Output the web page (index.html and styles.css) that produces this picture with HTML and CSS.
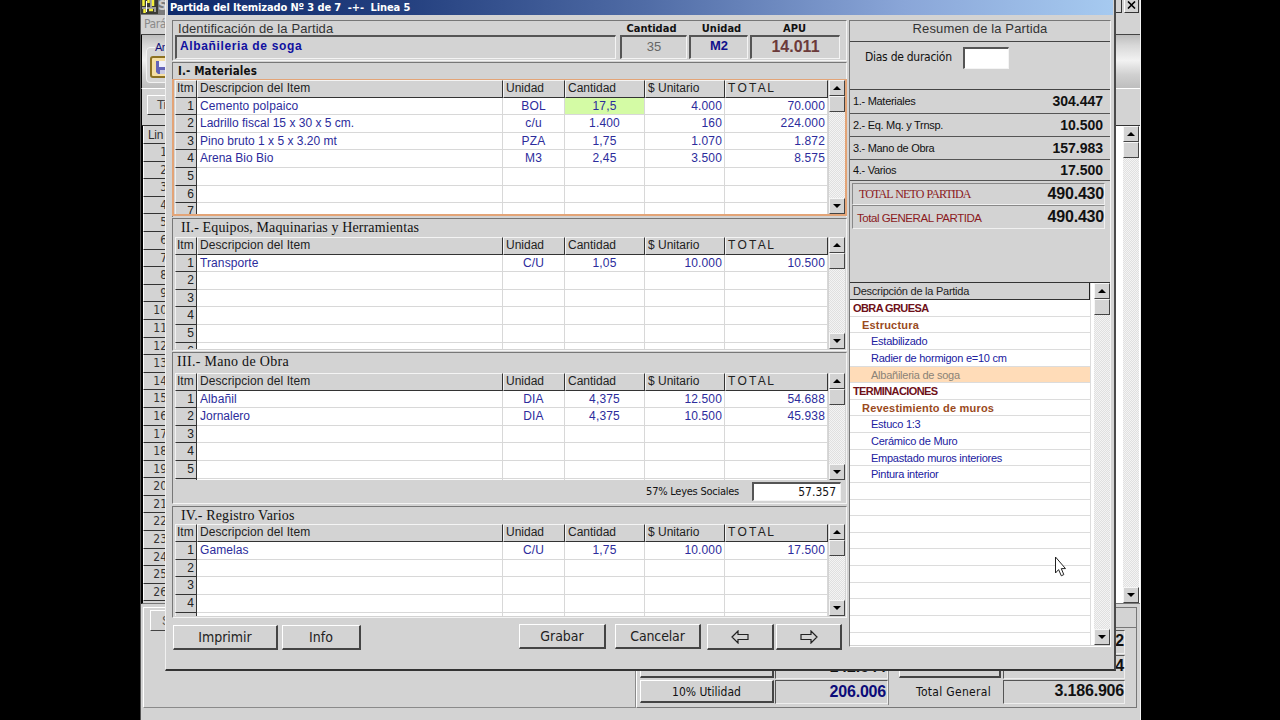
FILE: index.html
```html
<!DOCTYPE html>
<html lang="es">
<head>
  <meta charset="UTF-8" />
  <meta name="viewport" content="width=device-width, initial-scale=1.0"/>
  <title>Partida del Itemizado</title>
  <link rel="stylesheet" href="styles.css">
</head>
<body>
  <div class="main-window">
    <div class="main-title">
      <svg class="app-icon" width="17" height="14" viewBox="0 0 17 14">
        <path d="M0 0h17v14H0z" fill="#3a3a34"/>
        <path d="M2.5 0v6M7.5 0v3M12 0v6M3.500 9v4M8 10h4" stroke="#f4f03a" stroke-width="2.500" fill="none"/>
        <path d="M1 8h14M5.500 1v11M10 0v7M14 9v3" stroke="#fff" stroke-width="1"/>
      </svg>
      <span class="app-name">S</span>
      <div class="title-buttons"><i></i><i class="close"><svg width="9" height="8" viewBox="0 0 9 8"><path d="M1 0.5L8 7.5M8 0.5L1 7.5" stroke="#000" stroke-width="1.6"/></svg></i></div>
    </div>
    <div class="menu">Pará</div>
    <div class="toolbar">
      <fieldset><legend>Ar</legend>
        <div class="tool"><svg width="14" height="15" viewBox="0 0 14 15"><path d="M1 1h12v13H3l-2-2z" fill="#6464b8"/><path d="M4 1h7v6H4z" fill="#f0f0fa"/><path d="M5 10h6v4H5z" fill="#c8c8e0"/></svg></div>
      </fieldset>
    </div>
    <div class="tabs"><div class="tab">Ti</div></div>
    <div class="back-grid">
      <div class="back-rows" id="backRows"><div class="lin">Lin</div></div>
      <div class="scroll" id="backScroll"></div>
    </div>
    <div class="footer">
      <div class="foot-left"><div class="foot-btn">S</div></div>
      <div class="foot-right">
        <div class="foot-strip"></div>
        <div class="sums">
          <div class="sum-labels"><div class="raised"></div><div class="raised">10% Utilidad</div></div>
          <div class="sum-values"><div class="sunken">142.644</div><div class="sunken blue">206.006</div></div>
          <div class="sum-labels second"><div class="raised"></div><div class="plain">Total General</div></div>
          <div class="sum-values last"><div class="sunken">2</div><div class="sunken">4</div><div class="sunken">3.186.906</div></div>
        </div>
      </div>
    </div>
  </div>

  <div class="dialog">
    <div class="dialog-title"><span>Partida del Itemizado Nº 3 de 7 &nbsp;-+-&nbsp; Linea 5</span></div>
    <div class="dialog-body">
      <div class="left">
        <div class="panel ident">
          <div class="ident-name"><label>Identificación de la Partida</label><div class="field name">Albañileria de soga</div></div>
          <div class="ident-col cant"><b>Cantidad</b><div class="field">35</div></div>
          <div class="ident-col unid"><b>Unidad</b><div class="field">M2</div></div>
          <div class="ident-col apu"><b>APU</b><div class="field">14.011</div></div>
        </div>

        <div class="panel materiales">
          <h2>I.- Materiales</h2>
          <div class="grid active" data-grid="materiales"></div>
        </div>
        <div class="panel equipos">
          <h2>II.- Equipos, Maquinarias y Herramientas</h2>
          <div class="grid" data-grid="equipos"></div>
        </div>
        <div class="panel mano">
          <h2>III.- Mano de Obra</h2>
          <div class="grid" data-grid="mano"></div>
          <div class="leyes"><span>57% Leyes Sociales</span><div class="field">57.357</div></div>
        </div>
        <div class="panel varios">
          <h2>IV.- Registro Varios</h2>
          <div class="grid" data-grid="varios"></div>
        </div>

        <div class="buttons">
          <button class="imprimir">Imprimir</button>
          <button class="info">Info</button>
          <button class="grabar">Grabar</button>
          <button class="cancelar">Cancelar</button>
          <button class="prev"><svg width="18" height="14" viewBox="0 0 18 14"><path d="M1 7L7 1V4.5H17V9.5H7V13Z" fill="none" stroke="#222" stroke-width="1.2"/></svg></button>
          <button class="next"><svg width="18" height="14" viewBox="0 0 18 14"><path d="M17 7L11 1V4.5H1V9.5H11V13Z" fill="none" stroke="#222" stroke-width="1.2"/></svg></button>
        </div>
      </div>

      <div class="right">
        <div class="resumen-title"><span>Resumen de la Partida</span></div>
        <div class="dias"><span>Dias de duración</span><div class="field"></div></div>
        <div class="res-row r1"><span>1.- Materiales</span><b>304.447</b></div>
        <div class="res-row r2"><span>2.- Eq. Mq. y Trnsp.</span><b>10.500</b></div>
        <div class="res-row r3"><span>3.- Mano de Obra</span><b>157.983</b></div>
        <div class="res-row r4"><span>4.- Varios</span><b>17.500</b></div>
        <div class="total neto"><span>TOTAL NETO PARTIDA</span><b>490.430</b></div>
        <div class="total general"><span>Total GENERAL PARTIDA</span><b>490.430</b></div>
        <div class="list">
          <div class="list-rows" id="partidas"><div class="list-head">Descripción de la Partida</div></div>
          <div class="scroll" id="listScroll"></div>
        </div>
      </div>
    </div>
  </div>

  <svg class="cursor" width="13" height="21" viewBox="0 0 13 21"><path d="M1.500 1V17L4.6 13.6L7.3 19.8L9.800 18.6L7.3 12.6H11.500Z" fill="#fff" stroke="#222" stroke-width="1"/></svg>

  <script src="script.js"></script>
</body>
</html>
```
FILE: styles.css
```css
* {
  box-sizing: border-box;
}

body {
  margin: 0;
  width: 1280px;
  height: 720px;
  overflow: hidden;
  position: relative;
  background: #000;
  font-family: "Liberation Sans", Arial, sans-serif;
  font-size: 12px;
  color: #111;
}

/* ---- main window behind the dialog ---- */
.main-window {
  width: 1001px;
  height: 720px;
  margin-left: 140px;
  background: #d3d3d3;
  border-left: 1px solid #555;
  border-right: 1px solid #f4f4f4;
  overflow: hidden;
}

.main-title {
  display: flex;
  height: 15px;
  background: #7b7b7b;
}

.app-icon {
  flex: none;
}

.app-name {
  font: bold 14px/11px "DejaVu Sans Condensed", "DejaVu Sans", sans-serif;
  color: #ccc;
}

.title-buttons {
  display: flex;
  gap: 2px;
  margin-left: auto;
  padding-right: 1px;
  background: #d3d3d3;
}

.title-buttons i {
  width: 15px;
  height: 13px;
  background: #d3d3d3;
  border: 1px solid #fff;
  border-top: 0;
  border-right-color: #333;
  border-bottom-color: #333;
}

.close svg {
  display: block;
  margin: 1px 2px;
}

.menu {
  height: 20px;
  padding: 1px 0 0 3px;
  border-bottom: 1px solid #444;
  font: 12px/17px "DejaVu Sans Condensed", "DejaVu Sans", sans-serif;
  letter-spacing: -0.4px;
  color: #8a8a8a;
}

.toolbar {
  height: 53px;
  padding: 4px 0 0 4px;
  border-left: 1px solid #000;
  background: linear-gradient(#bdbdbd, #d8d8d8 20%, #f2f2f2 48%, #d0d0d0 75%, #bebebe);
}

.toolbar fieldset {
  width: 200px;
  height: 44px;
  margin: 0;
  padding: 0 0 0 3px;
  border: 1px solid #f2f2f2;
  border-radius: 4px;
  background: #d6d6d6;
}

.toolbar legend {
  padding: 0;
  margin-left: 5px;
  font-size: 11px;
  line-height: 16px;
  letter-spacing: -0.5px;
  color: #10107a;
}

.tool {
  width: 60px;
  height: 22px;
  margin-top: 1px;
  padding: 2px 3px;
  border: 2px solid #8d7222;
  border-radius: 3px;
  background: #f5dfa5;
}

.tabs {
  height: 37px;
  padding: 6px 0 0 5px;
  border-left: 1px solid #000;
  border-top: 1px solid #fff;
}

.tab {
  width: 100px;
  height: 20px;
  padding-left: 9px;
  line-height: 19px;
  font-size: 12px;
  letter-spacing: -0.5px;
  color: #444;
  border: 1px solid #fff;
  border-bottom: 1px solid #333;
}

.back-grid {
  display: flex;
  height: 479px;
  padding-right: 1px;
  border-top: 1px solid #333;
  border-left: 2px solid #000;
  border-bottom: 1px solid #777;
  background: #fff;
}

.back-rows {
  width: 60px;
  background: #d3d3d3;
  flex: none;
}

.back-rows div {
  height: 17.6px;
  padding-left: 1px;
  border-bottom: 1px solid #333;
  border-left: 1px solid #fff;
  font: 12px/17px "DejaVu Sans Condensed", "DejaVu Sans", sans-serif;
  color: #333;
}

.back-rows div span {
  display: block;
  width: 22px;
  text-align: right;
}

.back-rows .lin {
  height: 18px;
  padding-left: 4px;
  line-height: 18px;
  letter-spacing: -0.3px;
  font-family: "Liberation Sans", sans-serif;
}

.back-grid .scroll {
  margin-left: auto;
}

.footer {
  display: flex;
  height: 116px;
  padding: 3px 3px 12px 2px;
}

.foot-left {
  flex: none;
  width: 493px;
  border: 1px solid #8a8a8a;
  border-left-color: #fff;
  border-top-color: #fff;
  padding: 2px 0 0 6px;
}

.foot-btn {
  width: 60px;
  height: 21px;
  padding-left: 11px;
  line-height: 20px;
  color: #555;
  border: 1px solid #fff;
  border-bottom-color: #444;
}

.foot-right {
  flex: 1;
  border: 1px solid #777;
  border-left-color: #fff;
}

.foot-strip {
  height: 20px;
  border-bottom: 1px solid #777;
}

.sums {
  display: flex;
  padding-left: 3px;
}

.sum-labels {
  display: flex;
  flex-direction: column;
  gap: 2px;
  padding-top: 27px;
  padding-right: 1px;
  width: 135px;
  font: 12px/22px "DejaVu Sans Condensed", "DejaVu Sans", sans-serif;
  text-align: center;
}

.sum-values {
  width: 113px;
  padding-top: 27px;
}

.sum-labels.second {
  width: 115px;
  padding: 27px 2px 0 10px;
  border-left: 1px solid #888;
}

.second .plain {
  padding-left: 7px;
  line-height: 24px;
  letter-spacing: 0.3px;
  white-space: nowrap;
}

.sum-values.last {
  width: 122px;
  padding-top: 2px;
}

.raised,
.sum-labels .plain {
  height: 23px;
}

.raised {
  background: #d3d3d3;
  border: 1px solid #fff;
  border-right: 2px solid #444;
  border-bottom: 2px solid #444;
}

.sum-values .sunken {
  height: 24px;
  margin-bottom: 1px;
  padding-right: 1px;
  text-align: right;
  font: bold 16px/22px "Liberation Sans", sans-serif;
  letter-spacing: -0.2px;
  border: 1px solid #eee;
  border-left-color: #555;
  border-top-color: #555;
}

.last .sunken {
  padding-right: 0;
  line-height: 19px;
}

.sum-values .blue {
  color: #0b0b78;
}

/* ---- dialog ---- */
.dialog {
  position: absolute;
  left: 165px;
  top: 0;
  width: 951px;
  height: 671px;
  background: #d3d3d3;
  border-left: 1px solid #f0f0f0;
  border-right: 2px solid #4a4a4a;
  border-bottom: 2px solid #333;
}

.dialog-title {
  height: 15px;
  margin: 0 1px 0 2px;
  padding-left: 2px;
  background: linear-gradient(to right, #0e2a6b, #24407f 25%, #4f6ba5 50%, #8aa6d8 78%, #a6caf0);
  font: bold 11px/15px "DejaVu Sans Condensed", "DejaVu Sans", sans-serif;
  letter-spacing: -0.12px;
  color: #fff;
}

.dialog-body {
  display: flex;
  gap: 2px;
  padding: 5px 4px 0 6px;
}

.left {
  width: 675px;
  flex: none;
}

.panel {
  border-top: 1px solid #777;
  border-left: 1px solid #777;
  border-right: 1px solid #f4f4f4;
  border-bottom: 1px solid #f4f4f4;
}

.panel h2 {
  margin: 0;
  font: 14px/18px "Liberation Serif", "Times New Roman", serif;
  letter-spacing: 0.12px;
  color: #111;
  white-space: nowrap;
}

.ident {
  display: flex;
  height: 41px;
  padding: 0 5px 0 2px;
  margin-bottom: 1px;
}

.ident-name {
  width: 441px;
  margin-right: 4px;
}

.ident-name label {
  display: block;
  height: 14px;
  padding-left: 3px;
  font: 13px/16px "Liberation Sans", sans-serif;
  letter-spacing: 0.1px;
  color: #333;
}

.field {
  border: 1px solid #f4f4f4;
  border-top: 2px solid #555;
  border-left: 2px solid #555;
}

.ident .field {
  height: 24px;
}

.ident .name {
  padding-left: 3px;
  font: bold 12px/18px "Liberation Sans", sans-serif;
  letter-spacing: 0.64px;
  color: #1010a0;
}

.ident-col {
  text-align: center;
  margin-right: 2px;
}

.ident-col b {
  display: block;
  height: 14px;
  font: bold 11px/15px "DejaVu Sans Condensed", "DejaVu Sans", sans-serif;
}

.cant { width: 67px; }
.unid { width: 59px; }
.apu { width: 90px; margin-right: 0; }

.cant b { padding-right: 4px; }
.unid b { padding-left: 6px; }
.apu b { padding-right: 1px; }

.cant .field {
  font: 13px/20px "Liberation Sans", sans-serif;
  color: #666;
}

.unid .field {
  font: bold 13px/18px "Liberation Sans", sans-serif;
  color: #10108c;
}

.apu .field {
  font: bold 16px/20px "Liberation Sans", sans-serif;
  color: #6b3a3a;
}

.materiales { height: 155px; border-bottom: 0; margin-bottom: 1px; }
.equipos { height: 133px; margin-bottom: 1px; }
.mano { height: 152px; margin-bottom: 2px; }
.varios { height: 112px; }

.materiales h2 {
  height: 16px;
  padding-left: 5px;
  font: bold 11.5px/17px "DejaVu Sans Condensed", "DejaVu Sans", sans-serif;
}

.equipos h2 { height: 18px; padding-left: 8px; }
.mano h2 { height: 20px; padding-left: 4px; letter-spacing: 0.3px; }
.varios h2 { height: 17px; padding-left: 8px; }

/* ---- item grids ---- */
.grid {
  display: flex;
  gap: 1px;
  padding: 0 1px 0 2px;
  overflow: hidden;
}

.grid.active {
  height: 137px;
  margin: 0 -1px;
  padding: 0 0 0 1px;
  border: 2px solid #e3a477;
  border-top-width: 1px;
}

.equipos .grid { height: 112px; }
.mano .grid { height: 107px; }
.varios .grid { height: 92px; }

.rows {
  width: 653px;
  flex: none;
  overflow: hidden;
  background: #fff;
}

.row {
  display: grid;
  grid-template-columns: 22px 306px 62px 80px 80px 103px;
  grid-template-rows: 100%;
  height: 17.63px;
  line-height: 17px;
  color: #2c2c9c;
}

.row > div {
  padding: 0 3px;
  border-right: 1px solid #d8d8d8;
  border-bottom: 1px solid #d8d8d8;
  white-space: nowrap;
  letter-spacing: 0.15px;
}

.row > div:nth-child(2) {
  padding-left: 3px;
  letter-spacing: 0;
}

.row:nth-child(2) > div:nth-child(2) {
  letter-spacing: 0.1px;
}

.row > div:nth-child(3),
.row > div:nth-child(4) {
  text-align: center;
}

.row > div:nth-child(5),
.row > div:nth-child(6) {
  text-align: right;
  padding-right: 2px;
}

.row > .num {
  padding: 0 2px 0 0;
  text-align: right;
  font-size: 12px;
  color: #222;
  background: #d3d3d3;
  border-right: 1px solid #333;
  border-bottom: 1px solid #333;
  border-left: 1px solid #f0f0f0;
}

.row > .selected {
  background: #d4fba5;
}

.row.head {
  height: 17.5px;
}

.varios .row.head {
  height: 18px;
}

.row.head > div {
  padding: 0 2px;
  text-align: left;
  line-height: 15px;
  letter-spacing: 0;
  color: #222;
  background: #d3d3d3;
  border: 1px solid #333;
  border-top-color: #f4f4f4;
  border-left-color: #f4f4f4;
}

.row.head > div:first-child { padding: 0 0 0 1px; }
.row.head > div:nth-child(2) { letter-spacing: 0.08px; }
.row.head > div:nth-child(6) { letter-spacing: -0.5px; }

/* ---- scrollbars ---- */
.scroll {
  display: flex;
  flex-direction: column;
  flex: none;
  width: 16px;
  background: #e9e9e9 repeating-conic-gradient(#f4f4f4 0 25%, #e0e0e0 0 50%) 0 0 / 2px 2px;
}

.scroll i {
  display: flex;
  align-items: center;
  justify-content: center;
  height: 16px;
  background: #d3d3d3;
  border: 1px solid #f6f6f6;
  border-right: 1px solid #444;
  border-bottom: 1px solid #444;
}

.scroll i:last-child {
  margin-top: auto;
}

.leyes {
  display: flex;
  height: 22px;
  padding: 2px 5px 0 0;
  justify-content: flex-end;
  gap: 13px;
  font: 11px/20px "DejaVu Sans Condensed", "DejaVu Sans", sans-serif;
  letter-spacing: -0.25px;
}

.leyes .field {
  width: 89px;
  height: 19px;
  padding-right: 4px;
  background: #fff;
  text-align: right;
  line-height: 16px;
  font-size: 12px;
  letter-spacing: 0;
}

/* ---- buttons ---- */
.buttons {
  display: flex;
  padding: 6px 0 0 1px;
}

button {
  height: 25px;
  padding: 0;
  background: #d3d3d3;
  border: 1px solid #fff;
  border-right: 2px solid #444;
  border-bottom: 2px solid #444;
  font: 14px/21px "DejaVu Sans Condensed", "DejaVu Sans", sans-serif;
  color: #222;
}

button svg {
  display: block;
  margin: 0 auto;
}

.imprimir { width: 105px; margin: 1px 4px 0 0; }
.info { width: 79px; margin: 1px 158px 0 0; }
.grabar { width: 87px; margin-right: 9px; }
.cancelar { width: 86px; margin-right: 6px; letter-spacing: -0.15px; }
.prev { width: 67px; margin-right: 2px; height: 26px; }
.next { width: 66px; height: 26px; }

/* ---- summary side ---- */
.right {
  width: 262px;
  height: 627px;
  border: 1px solid #777;
  border-right-color: #f4f4f4;
  border-bottom: 1px solid #fff;
}

.resumen-title {
  height: 21px;
  border-bottom: 1px solid #444;
  text-align: center;
  font: 13px/16px "Liberation Sans", sans-serif;
  letter-spacing: 0.12px;
  color: #333;
}

.dias {
  display: flex;
  height: 48px;
  padding: 5px 0 0 15px;
  border-bottom: 1px solid #444;
  font: 12px/20px "DejaVu Sans Condensed", "DejaVu Sans", sans-serif;
  letter-spacing: -0.27px;
}

.dias span {
  width: 98px;
}

.dias .field {
  width: 46px;
  height: 22px;
  background: #fff;
}

.res-row {
  display: flex;
  justify-content: space-between;
  padding: 0 7px 0 3px;
  border-bottom: 1px solid #555;
  font-size: 11px;
  line-height: 23px;
}

.res-row span {
  letter-spacing: -0.3px;
}

.res-row b {
  font-size: 14px;
}

.r1 { height: 24px; }
.r2, .r3 { height: 23px; }
.r3 { line-height: 22px; }
.r4 { height: 21px; line-height: 20px; }

.total {
  display: flex;
  justify-content: space-between;
  height: 22px;
  margin: 2px 5px 0 2px;
  padding: 0 0 0 6px;
  border: 1px solid #f0f0f0;
  border-left-color: #888;
  border-top-color: #888;
  line-height: 19px;
  color: #8b1a22;
}

.total b {
  color: #111;
  font-size: 16px;
  letter-spacing: -0.2px;
}

.neto span {
  font: 12px/20px "Liberation Serif", serif;
  letter-spacing: -0.9px;
  word-spacing: 1px;
}

.total.general {
  height: 24px;
  margin-top: 0;
  padding-left: 4px;
  line-height: 22px;
}

.general span {
  font-size: 11.5px;
  line-height: 24px;
  letter-spacing: -0.45px;
}

.list {
  display: flex;
  gap: 3px;
  height: 363px;
  margin-top: 53px;
  border-top: 1px solid #333;
  background: #fff;
}

.list-rows {
  width: 241px;
  overflow: hidden;
  border-right: 1px solid #ddd;
}

.list-rows div {
  height: 16.63px;
  padding-left: 21px;
  border-bottom: 1px solid #dcdcdc;
  font-size: 11px;
  line-height: 17px;
  letter-spacing: -0.25px;
  color: #2020a0;
  white-space: nowrap;
}

.list-rows .chapter {
  padding-left: 3px;
  letter-spacing: -0.6px;
  color: #6e1018;
  font-weight: bold;
}

.list-rows .group {
  padding-left: 12px;
  letter-spacing: 0.2px;
  font-weight: bold;
  color: #9a4a1c;
}

.list-rows .current {
  background: #ffdcb8;
  color: #8b8377;
}

.list-rows .list-head {
  height: 17px;
  padding-left: 3px;
  background: #d3d3d3;
  border-right: 1px solid #222;
  border-bottom: 1px solid #333;
  color: #222;
}

.cursor {
  position: absolute;
  left: 1054px;
  top: 556px;
}
```
FILE: script.js
```js
const headers = ['Itm', 'Descripcion del Item', 'Unidad', 'Cantidad', '$ Unitario', 'T O T A L'];

const grids = {
  materiales: { count: 7, items: [
    ['Cemento polpaico', 'BOL', '17,5', '4.000', '70.000'],
    ['Ladrillo fiscal 15 x 30 x 5 cm.', 'c/u', '1.400', '160', '224.000'],
    ['Pino bruto 1 x 5 x 3.20 mt', 'PZA', '1,75', '1.070', '1.872'],
    ['Arena Bio Bio', 'M3', '2,45', '3.500', '8.575']
  ] },
  equipos: { count: 6, items: [['Transporte', 'C/U', '1,05', '10.000', '10.500']] },
  mano: { count: 6, numbered: 5, items: [
    ['Albañil', 'DIA', '4,375', '12.500', '54.688'],
    ['Jornalero', 'DIA', '4,375', '10.500', '45.938']
  ] },
  varios: { count: 5, numbered: 4, items: [['Gamelas', 'C/U', '1,75', '10.000', '17.500']] }
};

const partidas = [
  ['chapter', 'OBRA GRUESA'],
  ['group', 'Estructura'],
  ['', 'Estabilizado'],
  ['', 'Radier de hormigon e=10 cm'],
  ['current', 'Albañileria de soga'],
  ['chapter', 'TERMINACIONES'],
  ['group', 'Revestimiento de muros'],
  ['', 'Estuco 1:3'],
  ['', 'Cerámico de Muro'],
  ['', 'Empastado muros interiores'],
  ['', 'Pintura interior']
];

const arrow = d => `<i><svg width="8" height="4" viewBox="0 0 8 4"><path d="${d}" fill="#000"/></svg></i>`;
const scrollParts = arrow('M0 4L4 0L8 4Z') + '<i></i>' + arrow('M0 0L4 4L8 0Z');

document.querySelectorAll('.grid').forEach(grid => {
  const data = grids[grid.dataset.grid];
  const numbered = data.numbered || data.count;
  let html = '<div class="row head">' + headers.map(h => `<div>${h}</div>`).join('') + '</div>';
  for (let i = 0; i < data.count; i++) {
    const item = data.items[i] || ['', '', '', '', ''];
    const cells = item.map((text, c) => {
      const selected = grid.dataset.grid === 'materiales' && i === 0 && c === 2;
      return `<div${selected ? ' class="selected"' : ''}>${text}</div>`;
    });
    html += `<div class="row"><div class="num">${i < numbered ? i + 1 : ''}</div>${cells.join('')}</div>`;
  }
  grid.innerHTML = `<div class="rows">${html}</div><div class="scroll">${scrollParts}</div>`;
});

const list = document.getElementById('partidas');
for (let i = 0; i < 21; i++) {
  const [cls, text] = partidas[i] || ['', ''];
  list.innerHTML += `<div class="${cls}">${text}</div>`;
}

const back = document.getElementById('backRows');
for (let i = 1; i <= 26; i++) {
  back.innerHTML += `<div><span>${i}</span></div>`;
}

document.getElementById('listScroll').innerHTML = scrollParts;
document.getElementById('backScroll').innerHTML = scrollParts;
```
